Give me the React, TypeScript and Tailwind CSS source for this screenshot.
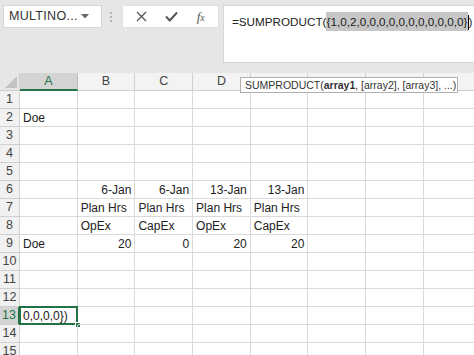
import React from "react";

const COLS = ["A", "B", "C", "D", "E", "F", "G", "H"];
const ROWS = Array.from({ length: 15 }, (_, i) => i + 1);
// E..H header letters sit under the function tooltip
const HIDDEN_HEADERS = ["E", "F", "G", "H"];

type Cell = { t: string; right?: boolean };

const cells: Record<string, Cell> = {
  A2: { t: "Doe" },
  B6: { t: "6-Jan", right: true },
  C6: { t: "6-Jan", right: true },
  D6: { t: "13-Jan", right: true },
  E6: { t: "13-Jan", right: true },
  B7: { t: "Plan Hrs" },
  C7: { t: "Plan Hrs" },
  D7: { t: "Plan Hrs" },
  E7: { t: "Plan Hrs" },
  B8: { t: "OpEx" },
  C8: { t: "CapEx" },
  D8: { t: "OpEx" },
  E8: { t: "CapEx" },
  A9: { t: "Doe" },
  B9: { t: "20", right: true },
  C9: { t: "0", right: true },
  D9: { t: "20", right: true },
  E9: { t: "20", right: true },
  A13: { t: "0,0,0,0})" },
};

const font = { fontFamily: '"Liberation Sans", Arial, sans-serif' };

export default function App() {
  return (
    <div
      className="relative w-[474px] h-[355px] overflow-hidden bg-white text-[#222]"
      style={font}
    >
      {/* formula bar */}
      <div className="h-[73px] bg-[#e6e6e6] flex items-start pt-[5px] pl-[3px]">
        <div className="w-[99px] h-[23px] bg-white border border-[#d6d6d6] flex items-center justify-between pl-[5px] pr-[12px]">
          <span className="text-[12.5px] tracking-[0.3px] text-[#333]">MULTINO...</span>
          <svg width="8" height="5" viewBox="0 0 8 5">
            <path d="M0 0 L8 0 L4 4.5 Z" fill="#666" />
          </svg>
        </div>
        <div className="w-[18px] h-[23px] flex flex-col items-center justify-center gap-[2px] mr-[2px]">
          <span className="w-[2px] h-[2px] bg-[#b5b5b5]" />
          <span className="w-[2px] h-[2px] bg-[#b5b5b5]" />
          <span className="w-[2px] h-[2px] bg-[#b5b5b5]" />
        </div>
        <div className="w-[97px] h-[23px] bg-white border border-[#e0e0e0] flex items-center justify-around px-[4px]">
          <svg width="11" height="11" viewBox="0 0 11 11">
            <path d="M1 1 L10 10 M10 1 L1 10" stroke="#555" strokeWidth="1.3" />
          </svg>
          <svg width="13" height="11" viewBox="0 0 13 11">
            <path d="M1 5.5 L4.8 9.5 L12 1.5" stroke="#555" strokeWidth="2" fill="none" />
          </svg>
          <span
            className="text-[13px] italic text-[#555] leading-none"
            style={{ fontFamily: '"Liberation Serif", "Times New Roman", serif' }}
          >
            f<span className="text-[10px]">x</span>
          </span>
        </div>
        <div className="ml-[4px] flex-1 h-[58px] bg-white border-l border-b border-t border-[#d6d6d6] pl-[8px] pt-[3px] overflow-hidden whitespace-nowrap">
          <span className="text-[11.7px] leading-[16px] text-[#222]">
            =SUMPRODUCT(
            <span className="bg-[#c6c6c6] py-[3px]">{"{1,0,2,0,0,0,0,0,0,0,0,0,0,0}"}</span>
            <span className="inline-block w-[1px] h-[15px] bg-black align-middle" />)
          </span>
        </div>
      </div>

      {/* sheet */}
      <div className="grid grid-cols-[20px_repeat(8,57.7px)] auto-rows-[18px]">
        <div className="bg-[#e6e6e6] border-r border-b border-[#cfcfcf] relative">
          <svg className="absolute right-[2px] bottom-[2px]" width="12" height="12" viewBox="0 0 12 12">
            <path d="M12 0 L12 12 L0 12 Z" fill="#c3c3c3" />
          </svg>
        </div>
        {COLS.map((c) => (
          <div
            key={c}
            className={
              c === "A"
                ? "bg-[#d3d3d3] border-r border-[#bdbdbd] border-b-2 border-b-[#217346] text-[#217346] text-[12.5px] flex items-center justify-center"
                : "bg-[#f3f3f3] border-r border-b border-[#d0d0d0] text-[#444] text-[12.5px] flex items-center justify-center"
            }
          >
            {HIDDEN_HEADERS.includes(c) ? "" : c}
          </div>
        ))}
        {ROWS.map((r) => (
          <React.Fragment key={r}>
            <div
              className={
                r === 13
                  ? "bg-[#d3d3d3] border-b border-[#cfcfcf] border-r-2 border-r-[#217346] text-[#217346] text-[12.5px] flex items-center justify-center"
                  : "bg-[#f1f1f1] border-r border-b border-[#d0d0d0] text-[#444] text-[12.5px] flex items-center justify-center"
              }
            >
              {r}
            </div>
            {COLS.map((c) => {
              const cell = cells[c + r];
              const active = c === "A" && r === 13;
              return (
                <div
                  key={c}
                  className={
                    "relative border-r border-b border-[#dadada] text-[12px] flex items-center px-[3px] whitespace-nowrap " +
                    (cell?.right ? "justify-end" : "justify-start")
                  }
                >
                  {cell?.t}
                  {active && (
                    <>
                      <div className="absolute -left-[1px] -top-[1px] -right-[1px] -bottom-[1px] border-2 border-[#217346]" />
                      <div className="absolute -right-[4px] -bottom-[4px] w-[6px] h-[6px] bg-[#217346] border border-white" />
                    </>
                  )}
                </div>
              );
            })}
          </React.Fragment>
        ))}
      </div>

      {/* function tooltip */}
      <div className="absolute left-[240px] top-[77px] w-[218px] h-[16px] bg-white border border-[#b0b0b0] text-[10.5px] leading-[14px] text-[#333] pl-[4px] whitespace-nowrap">
        SUMPRODUCT(<b>array1</b>, [array2], [array3], ...)
      </div>
    </div>
  );
}
